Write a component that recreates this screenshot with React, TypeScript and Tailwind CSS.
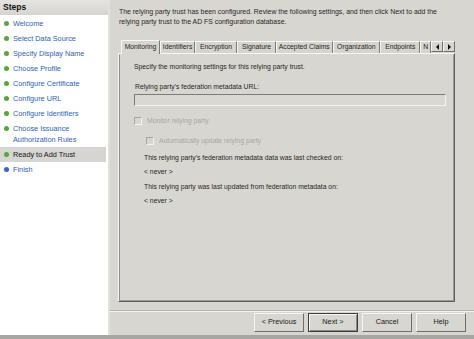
import React from "react";

const steps = [
  { label: "Welcome", done: true },
  { label: "Select Data Source", done: true },
  { label: "Specify Display Name", done: true },
  { label: "Choose Profile", done: true },
  { label: "Configure Certificate", done: true },
  { label: "Configure URL", done: true },
  { label: "Configure Identifiers", done: true },
  { label: "Choose Issuance Authorization Rules", done: true },
  { label: "Ready to Add Trust", done: true, current: true },
  { label: "Finish", done: false },
];

const tabs = [
  { label: "Monitoring", w: "w-[40px]" },
  { label: "Identifiers", w: "w-[36px]" },
  { label: "Encryption", w: "w-[43px]" },
  { label: "Signature", w: "w-[40px]" },
  { label: "Accepted Claims", w: "w-[58px]" },
  { label: "Organization", w: "w-[49px]" },
  { label: "Endpoints", w: "w-[41px]" },
  { label: "N", w: "w-[11px]" },
];

const Check = ({ label, className }: { label: string; className?: string }) => (
  <div className={`flex items-center gap-[5px] ${className ?? ""}`}>
    <span className="w-[8px] h-[8px] border-t border-l border-[#a8a6a0] border-r border-b border-r-[#f4f4f2] border-b-[#f4f4f2] bg-[#d8d6d0]" />
    <span className="text-[#a9a7a2]">{label}</span>
  </div>
);

const Button = ({ label, focus }: { label: string; focus?: boolean }) => (
  <div
    className={`w-[50px] h-[19px] flex items-center justify-center bg-[#d8d6d0] border ${
      focus
        ? "border-[#3c3c3c] shadow-[inset_1px_1px_0_#f6f6f4,inset_-1px_-1px_0_#8a8a88]"
        : "border-t-[#f6f6f4] border-l-[#f6f6f4] border-r-[#6e6e6c] border-b-[#6e6e6c]"
    } text-[7.3px] text-[#202020]`}
  >
    {label}
  </div>
);

export default function App() {
  return (
    <div
      className="w-[474px] h-[339px] flex flex-col overflow-hidden bg-[#d8d6d0] text-[#1e1e1e]"
      style={{ fontFamily: '"Liberation Sans", Arial, sans-serif' }}
    >
      <div className="flex flex-1 min-h-0">
        {/* steps */}
        <div className="w-[110px] shrink-0 bg-white border-r-2 border-[#e2e0dc] flex flex-col">
          <div className="h-[15px] bg-gradient-to-b from-[#e6e4e0] to-[#d6d4cf] pl-[3px] flex items-center text-[8.5px] font-bold text-[#111]">
            Steps
          </div>
          <div className="flex flex-col pt-[1px] pr-[2px]">
            {steps.map((s) => (
              <div
                key={s.label}
                className={`flex items-start gap-[4px] pl-[4px] py-[2px] text-[7.3px] leading-[11px] ${
                  s.current ? "bg-[#d7d5d1] text-[#141414]" : "text-[#2e62b4]"
                }`}
              >
                <span
                  className={`mt-[3px] w-[5px] h-[5px] shrink-0 rounded-full ${
                    s.done ? "bg-[#58a63a]" : "bg-[#3466d0]"
                  }`}
                />
                <span className="w-[86px]">{s.label}</span>
              </div>
            ))}
          </div>
        </div>

        {/* main */}
        <div className="flex-1 min-w-0 flex flex-col pl-[8px] pr-[19px]">
          <p className="pt-[7px] pl-[1px] text-[6.9px] leading-[10px] text-[#262626] whitespace-nowrap">
            The relying party trust has been configured. Review the following settings, and then click Next to add the
            <br />
            relying party trust to the AD FS configuration database.
          </p>

          <div className="mt-[12px] flex items-end pl-[3px] h-[14px]">
            {tabs.map((t, i) => (
              <div
                key={t.label}
                className={`${t.w} flex items-center justify-center border-t border-l border-r border-t-[#f6f6f4] border-l-[#f6f6f4] border-r-[#7a7a78] text-[6.8px] whitespace-nowrap overflow-hidden ${
                  i === 0 ? "h-[14px] bg-[#d8d6d0] relative z-10 -mb-px" : "h-[12px] bg-[#d6d4ce]"
                }`}
              >
                {t.label}
              </div>
            ))}
            <div className="flex h-[12px]">
              <div className="w-[12px] h-[11px] border border-t-[#f6f6f4] border-l-[#f6f6f4] border-r-[#6e6e6c] border-b-[#6e6e6c] flex items-center justify-center">
                <span className="w-0 h-0 border-y-[3px] border-y-transparent border-r-[3px] border-r-[#111]" />
              </div>
              <div className="w-[12px] h-[11px] border border-t-[#f6f6f4] border-l-[#f6f6f4] border-r-[#6e6e6c] border-b-[#6e6e6c] flex items-center justify-center">
                <span className="w-0 h-0 border-y-[3px] border-y-transparent border-l-[3px] border-l-[#111]" />
              </div>
            </div>
          </div>

          <div className="h-[249px] shrink-0 border border-t-[#f6f6f4] border-l-[#f6f6f4] border-r-[#5e5e5c] border-b-[#5e5e5c]">
            <div className="h-full border border-t-transparent border-l-[#8a8a88] border-r-[#9a9a98] border-b-[#9a9a98] pl-[14px] pr-[7px] pt-[7px] text-[6.8px] leading-[10px] text-[#262626]">
              <div>Specify the monitoring settings for this relying party trust.</div>
              <div className="mt-[10px] pl-[1px]">Relying party&apos;s federation metadata URL:</div>
              <div className="mt-[2px] h-[12px] bg-[#d9d8d3] border border-t-[#7c7c7a] border-l-[#7c7c7a] border-r-[#f2f2f0] border-b-[#f2f2f0]" />
              <Check label="Monitor relying party" className="mt-[10px]" />
              <Check label="Automatically update relying party" className="mt-[10px] pl-[12px]" />
              <div className="mt-[7px] pl-[10px]">This relying party&apos;s federation metadata data was last checked on:</div>
              <div className="mt-[4px] pl-[10px]">&lt; never &gt;</div>
              <div className="mt-[5px] pl-[10px]">This relying party was last updated from federation metadata on:</div>
              <div className="mt-[4px] pl-[10px]">&lt; never &gt;</div>
            </div>
          </div>

          {/* footer */}
          <div className="mt-[8px] -ml-[8px] -mr-[19px] h-[25px] border-t border-[#b4b2ad] shadow-[inset_0_1px_0_#f4f4f2] flex items-start justify-end gap-[4px] pr-[8px] pt-[2px]">
            <Button label="< Previous" />
            <Button label="Next >" focus />
            <Button label="Cancel" />
            <Button label="Help" />
          </div>
        </div>
      </div>
      <div className="h-[4px] shrink-0 bg-[#a7a6a3]" />
    </div>
  );
}
